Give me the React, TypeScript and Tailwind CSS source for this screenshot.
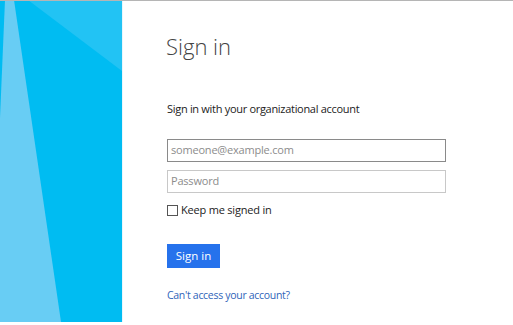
import React from "react";

export default function App() {
  return (
    <div className="w-[513px] h-[325px] bg-white overflow-hidden relative" style={{ fontFamily: '"Open Sans", "Noto Sans", sans-serif' }}>
      <div className="absolute top-0 left-0 w-full h-px bg-[#b5b5b5]" />
      <div className="flex h-full">
        <div className="w-[122px] h-[322px] shrink-0">
          <svg width="122" height="322" viewBox="0 0 122 322" className="block">
            <rect width="122" height="322" fill="#00bcf2" />
            <polygon points="28,0 122,0 122,71" fill="#22c3f4" />
            <polygon points="5,0 14,0 61,322 0,322 0,118" fill="#68cdf4" />
          </svg>
        </div>
        <div className="w-px h-[322px] bg-[#e8f6fc]" />
        <div className="flex flex-col pl-[44px] pt-[31px]">
          <h1 className="text-[22px] font-light leading-[30px] text-[#444] -ml-[1px]">Sign in</h1>
          <p className="mt-[40px] text-[11px] tracking-[-0.3px] leading-[16px] text-[#222]">Sign in with your organizational account</p>
          <div className="mt-[22px] w-[279px] h-[23px] border border-[#8a8a8a] flex items-center pl-[3px] text-[11px] tracking-[-0.2px] text-[#8c8c8c]">someone@example.com</div>
          <div className="mt-[8px] w-[279px] h-[23px] border border-[#c8c8c8] flex items-center pl-[3px] text-[11px] tracking-[-0.2px] text-[#8c8c8c]">Password</div>
          <div className="mt-[10px] flex items-center gap-[3px] text-[11px] tracking-[-0.2px] text-[#222] leading-[14px]">
            <span className="w-[11px] h-[11px] border border-[#555] bg-white" />
            <span>Keep me signed in</span>
          </div>
          <div className="mt-[27px] w-[53px] h-[24px] bg-[#2672ec] text-white text-[11.5px] flex items-center justify-center">Sign in</div>
          <p className="mt-[20px] text-[10.5px] tracking-[-0.3px] text-[#2f64b9] leading-[14px]">Can't access your account?</p>
        </div>
      </div>
    </div>
  );
}
